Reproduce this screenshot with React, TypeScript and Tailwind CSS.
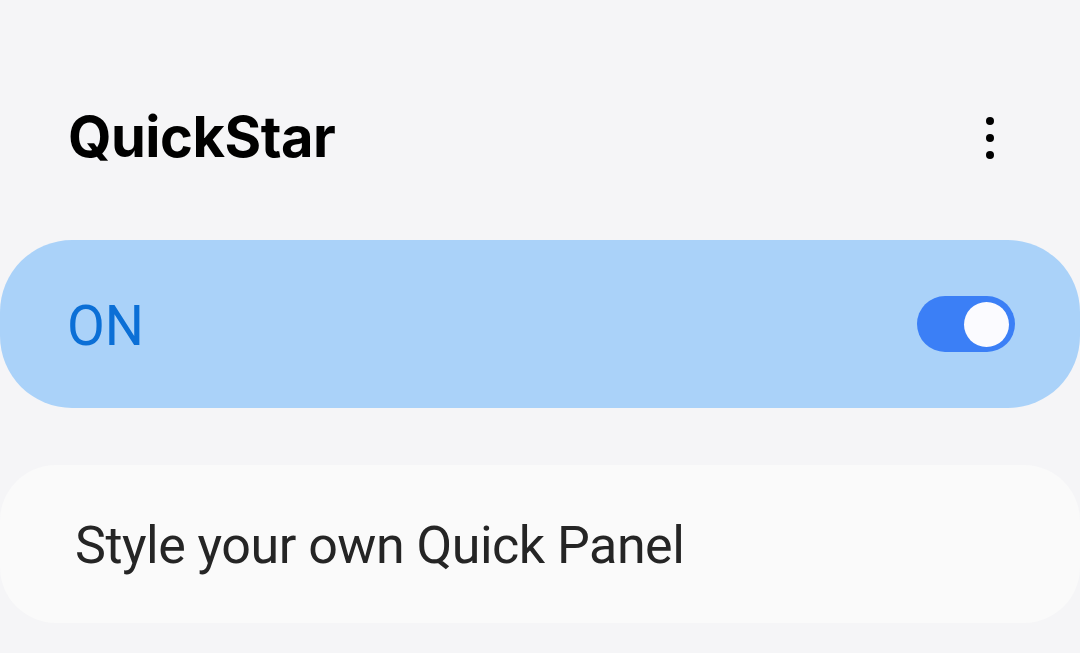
import React, { useState } from 'react';

export default function App() {
  const [on, setOn] = useState(true);

  return (
    <div className="w-[1080px] h-[653px] bg-[#f5f5f7] overflow-hidden">
      {/* Header */}
      <div className="h-[240px] pl-[68px] pr-[78px] pt-[104px] flex items-start justify-between">
        <h1 className="text-[56px] leading-[66px] font-bold text-black tracking-[-0.5px]" style={{ fontFamily: 'Inter, sans-serif' }}>
          QuickStar
        </h1>
        <button className="mt-[10px] w-[24px] h-[48px] flex flex-col items-center justify-center gap-[9px]">
          <span className="w-[8px] h-[8px] rounded-full bg-black" />
          <span className="w-[8px] h-[8px] rounded-full bg-black" />
          <span className="w-[8px] h-[8px] rounded-full bg-black" />
        </button>
      </div>

      {/* Master switch */}
      <div
        className="h-[168px] rounded-[72px] bg-[#aad2f9] pl-[67px] pr-[65px] flex items-center justify-between cursor-pointer"
        onClick={() => setOn(!on)}
      >
        <span className="text-[55px] leading-none pt-[4px] text-[#0b6fd6]" style={{ fontFamily: 'Roboto, sans-serif' }}>
          {on ? 'ON' : 'OFF'}
        </span>
        <div className={on ? 'w-[98px] h-[56px] rounded-full bg-[#3b7ff6] flex items-center justify-end pr-[6px]' : 'w-[98px] h-[56px] rounded-full bg-[#8a8a8a] flex items-center justify-start pl-[6px]'}>
          <div className="w-[45px] h-[45px] rounded-full bg-[#fbfbff]" />
        </div>
      </div>

      {/* Description card */}
      <div className="mt-[57px] h-[158px] rounded-[56px] bg-[#fafafa] pl-[75px] flex items-center">
        <span className="text-[52px] leading-none pt-[4px] text-[#252525] tracking-[-0.5px]" style={{ fontFamily: 'Roboto, sans-serif' }}>
          Style your own Quick Panel
        </span>
      </div>
    </div>
  );
}
